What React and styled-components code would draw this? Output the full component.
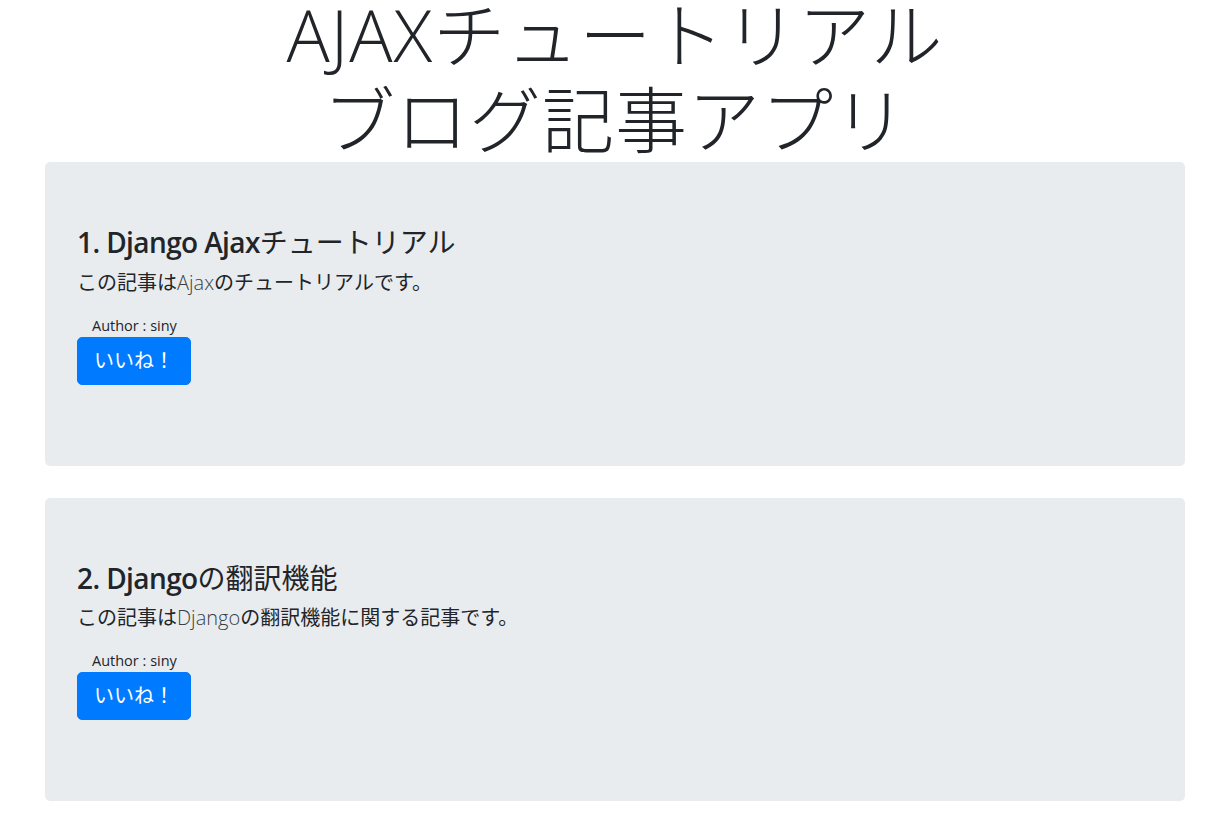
import React from "react";
import styled, { createGlobalStyle } from "styled-components";

const GlobalStyle = createGlobalStyle`
  html, body {
    margin: 0;
    padding: 0;
    background: #fff;
  }
  body {
    font-family: "Open Sans", "Noto Sans CJK JP", sans-serif;
    font-size: 16px;
    line-height: 1.5;
    color: #212529;
  }
`;

const Container = styled.div`
  width: 1140px;
  margin: 0 0 0 45px;
`;

const Title = styled.h1`
  margin: -8px 0 0;
  font-size: 72px;
  font-weight: 300;
  line-height: 1.18;
  letter-spacing: 1px;
  text-align: center;
`;

const Jumbotron = styled.section`
  background: #e9ecef;
  border-radius: 5px;
  padding: 64px 32px;
  margin-bottom: 32px;
`;

const PostTitle = styled.h3`
  margin: 0 0 8px;
  font-size: 28px;
  font-weight: 400;
  line-height: 1.2;
`;

// latin part of a heading is set heavier than the kana
const Strong = styled.span`
  font-weight: 600;
  letter-spacing: -0.6px;
`;

const Lead = styled.p`
  margin: 0 0 16px;
  font-size: 20px;
  font-weight: 400;
  line-height: 1.5;
`;

const Term = styled.span`
  font-weight: 300;
  color: #3a3f44;
`;

const Author = styled.div`
  margin-left: 15px;
  font-size: 14.5px;
  line-height: 23px;
`;

const LikeForm = styled.form`
  margin: 0 0 17px;
`;

const LikeButton = styled.button`
  font-family: inherit;
  font-size: 20px;
  line-height: 1.5;
  padding: 8px 16px;
  color: #fff;
  background: #007bff;
  border: 1px solid #007bff;
  border-radius: 5px;
  cursor: pointer;
`;

const posts = [
  {
    id: 1,
    latin: "Django Ajax",
    kana: "チュートリアル",
    before: "この記事は",
    term: "Ajax",
    after: "のチュートリアルです。",
    author: "siny",
  },
  {
    id: 2,
    latin: "Django",
    kana: "の翻訳機能",
    before: "この記事は",
    term: "Django",
    after: "の翻訳機能に関する記事です。",
    author: "siny",
  },
];

export default function App() {
  return (
    <>
      <GlobalStyle />
      <Container>
        <Title>
          AJAXチュートリアル
          <br />
          ブログ記事アプリ
        </Title>
        {posts.map((post) => (
          <Jumbotron key={post.id}>
            <PostTitle>
              <Strong>
                {post.id}. {post.latin}
              </Strong>
              {post.kana}
            </PostTitle>
            <Lead>
              {post.before}
              <Term>{post.term}</Term>
              {post.after}
            </Lead>
            <Author>Author : {post.author}</Author>
            <LikeForm onSubmit={(e) => e.preventDefault()}>
              <LikeButton type="submit">いいね！</LikeButton>
            </LikeForm>
          </Jumbotron>
        ))}
      </Container>
    </>
  );
}
